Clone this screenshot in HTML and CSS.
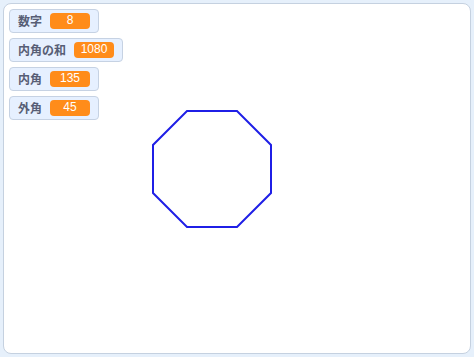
FILE: index.html
```html
<!DOCTYPE html>
<html lang="ja">
<head>
    <meta charset="UTF-8">
    <meta name="viewport" content="width=device-width, initial-scale=1.0">
    <title>ステージ</title>
    <link rel="stylesheet" href="styles.css">
</head>
<body>
    <div class="stage">
        <svg class="pen-layer" width="466" height="349" viewBox="0 0 466 349">
            <polygon points="183,107 233,107 267,141 267,189 233,223 183,223 149,189 149,141"
                     fill="none" stroke="#1f1fe6" stroke-width="2"/>
        </svg>
        <div class="monitors">
            <div class="monitor">
                <span class="label">数字</span>
                <span class="value">8</span>
            </div>
            <div class="monitor">
                <span class="label">内角の和</span>
                <span class="value">1080</span>
            </div>
            <div class="monitor">
                <span class="label">内角</span>
                <span class="value">135</span>
            </div>
            <div class="monitor">
                <span class="label">外角</span>
                <span class="value">45</span>
            </div>
        </div>
    </div>
</body>
</html>
```

FILE: styles.css
```css
body {
    margin: 0;
    padding: 3px;
    background-color: #e6f0fb;
    font-family: "Liberation Sans", "Noto Sans CJK JP", sans-serif;
}
.stage {
    position: relative;
    box-sizing: border-box;
    width: 468px;
    height: 351px;
    background-color: #fff;
    border: 1px solid #c5d1e0;
    border-radius: 8px;
    padding: 5px;
}
.pen-layer {
    position: absolute;
    left: 0;
    top: 0;
}
.monitors {
    position: relative;
    display: flex;
    flex-direction: column;
    align-items: flex-start;
    gap: 5px;
}
.monitor {
    display: flex;
    align-items: center;
    gap: 8px;
    padding: 3px 8px;
    background-color: #e6f0ff;
    border: 1px solid #c6d2e3;
    border-radius: 4px;
}
.label {
    font-family: "Noto Sans CJK JP", sans-serif;
    font-size: 12px;
    font-weight: bold;
    color: #575e75;
    line-height: 16px;
}
.value {
    box-sizing: border-box;
    min-width: 40px;
    height: 16px;
    padding: 0 3px;
    background-color: #ff8c1a;
    border-radius: 4px;
    color: #fff;
    font-size: 12px;
    line-height: 15px;
    text-align: center;
}
```
